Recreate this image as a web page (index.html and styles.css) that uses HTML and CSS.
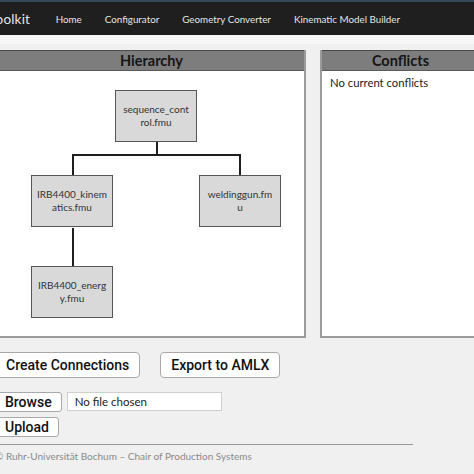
FILE: index.html
```html
<!DOCTYPE html>
<html lang="en">
<head>
<meta charset="utf-8">
<title>Toolkit – Configurator</title>
<link rel="stylesheet" href="styles.css">
</head>
<body>
<nav class="navbar">
  <span class="brand">Toolkit</span>
  <ul class="nav-links">
    <li>Home</li>
    <li>Configurator</li>
    <li>Geometry Converter</li>
    <li>Kinematic Model Builder</li>
  </ul>
</nav>
<main class="page">
  <div class="panels">
    <section class="panel">
      <h2 class="panel-head">Hierarchy</h2>
      <div class="panel-body tree">
        <svg class="tree-lines" width="309" height="265" viewBox="0 0 309 265">
          <g stroke="#1e1e1e" stroke-width="2" fill="none">
            <line x1="158" y1="71" x2="158" y2="84"/>
            <line x1="73" y1="84" x2="242" y2="84"/>
            <line x1="74" y1="84" x2="74" y2="104"/>
            <line x1="241" y1="84" x2="241" y2="104"/>
            <line x1="74" y1="157" x2="74" y2="195"/>
          </g>
        </svg>
        <div class="node n1"><span>sequence_cont</span><span>rol.fmu</span></div>
        <div class="node n2"><span>IRB4400_kinem</span><span>atics.fmu</span></div>
        <div class="node n3"><span>weldinggun.fm</span><span>u</span></div>
        <div class="node n4"><span>IRB4400_energ</span><span>y.fmu</span></div>
      </div>
    </section>
    <section class="panel">
      <h2 class="panel-head">Conflicts</h2>
      <div class="panel-body conflicts">No current conflicts</div>
    </section>
  </div>
  <div class="actions">
    <button class="btn">Create Connections</button>
    <button class="btn">Export to AMLX</button>
  </div>
  <div class="file-row">
    <button class="btn btn-sm">Browse</button>
    <div class="file-name">No file chosen</div>
  </div>
  <div class="upload-row">
    <button class="btn btn-sm">Upload</button>
  </div>
  <hr class="rule">
  <footer class="footer">© Ruhr-Universität Bochum – Chair of Production Systems</footer>
</main>
</body>
</html>
```

FILE: styles.css
```css
html, body {
  margin: 0;
  padding: 0;
}
body {
  width: 474px;
  height: 474px;
  overflow: hidden;
  background: #f0f0f0;
  font-family: Lato, "Open Sans", sans-serif;
  color: #222;
}
.navbar {
  height: 33px;
  background: #1f1f1f;
  border-top: 2px solid #34495e;
  display: flex;
  align-items: center;
}
.brand {
  margin-left: -11px;
  font-size: 13.5px;
  color: #e6e6e6;
  letter-spacing: 0.2px;
}
.nav-links {
  list-style: none;
  display: flex;
  margin: 0 0 0 14px;
  padding: 0;
}
.nav-links li {
  font-size: 9.8px;
  color: #e4e4e4;
  padding: 0 11.5px;
}
.page {
  background: #f0f0f0;
  border-top: 9px solid #f7f7f7;
  margin-left: -5px;
  padding-top: 6px;
}
.panels {
  display: grid;
  grid-template-columns: 309px 161px;
  column-gap: 14px;
  margin-left: 2px;
}
.panel {
  border: 2px solid #9b9b9b;
  border-top: 0;
  background: #fff;
  height: 286px;
  display: flex;
  flex-direction: column;
}
.panel-head {
  margin: 0;
  height: 19px;
  line-height: 19px;
  background: #7d7d7d;
  border-top: 1px solid #4a4a4a;
  border-bottom: 1px solid #5a5a5a;
  text-align: center;
  font-size: 14.5px;
  font-weight: 700;
  color: #151515;
}
.panel-body {
  flex: 1;
}
.tree {
  position: relative;
}
.tree-lines {
  position: absolute;
  left: 0;
  top: 0;
}
.node {
  position: absolute;
  width: 80px;
  height: 50px;
  background: #d9d9d9;
  border: 1.5px solid #555;
  display: flex;
  flex-direction: column;
  justify-content: center;
  align-items: center;
  font-size: 10px;
  line-height: 13px;
  color: #333;
}
.node span {
  display: block;
}
.n1 { left: 116px; top: 19px; }
.n2 { left: 32px; top: 104px; }
.n3 { left: 200px; top: 104px; }
.n4 { left: 32px; top: 195px; }
.conflicts {
  padding: 5px 9px 5px 8px;
  font-size: 11.3px;
  color: #222;
}
.actions {
  display: flex;
  gap: 20px;
  margin-top: 14px;
}
.btn {
  font-family: Roboto, "Liberation Sans", sans-serif;
  font-weight: 500;
  font-size: 14px;
  color: #111;
  background: #fff;
  border: 1px solid #a9a9a9;
  border-radius: 4px;
  height: 26px;
  padding: 0 10px;
}
.btn-sm {
  height: 20px;
  padding: 0 9px;
  border-radius: 3px;
}
.file-row {
  display: flex;
  gap: 5px;
  margin-top: 14px;
  align-items: flex-start;
}
.file-name {
  width: 146px;
  height: 17px;
  line-height: 17px;
  padding-left: 7px;
  background: #fff;
  border: 1px solid #cfcfcf;
  font-size: 11.5px;
  color: #222;
}
.upload-row {
  margin-top: 5px;
  display: flex;
}
.rule {
  margin: 7px 0 0 0;
  width: 418px;
  border: 0;
  border-top: 1px solid #9a9a9a;
}
.footer {
  margin-top: 5px;
  font-size: 10px;
  color: #8a8a8a;
}
```
